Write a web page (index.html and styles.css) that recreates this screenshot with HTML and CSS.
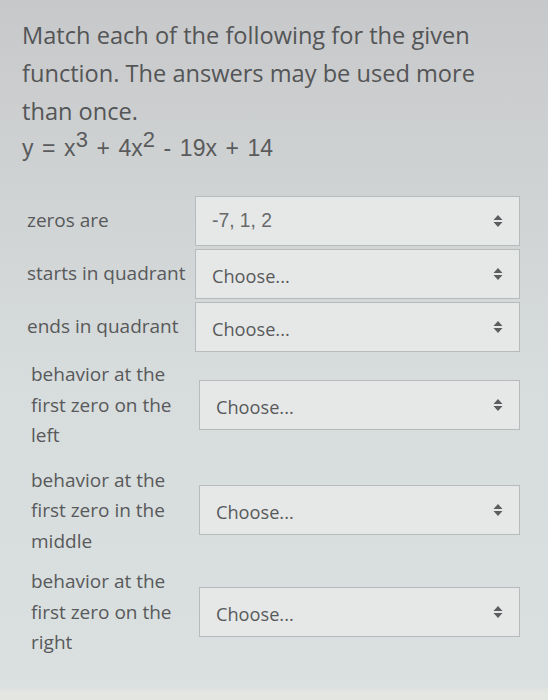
FILE: index.html
```html
<!DOCTYPE html>
<html>
<head>
<meta charset="utf-8">
<link rel="stylesheet" href="styles.css">
</head>
<body>
<div class="panel">
  <p class="prompt">Match each of the following for the given function. The answers may be used more than once.</p>
  <p class="equation">y = x<sup>3</sup> + 4x<sup>2</sup> - 19x + 14</p>
  <div class="rows">
    <div class="row short">
      <div class="label">zeros are</div>
      <div class="select"><span class="value">-7, 1, 2</span><span class="arrows"><svg width="10" height="14" viewBox="0 0 10 14"><path d="M5 1 L9.5 6 H0.5 Z M0.5 8 H9.5 L5 13 Z" fill="#5b5d5e"/></svg></span></div>
    </div>
    <div class="row short">
      <div class="label">starts in quadrant</div>
      <div class="select"><span class="choose">Choose...</span><span class="arrows"><svg width="10" height="14" viewBox="0 0 10 14"><path d="M5 1 L9.5 6 H0.5 Z M0.5 8 H9.5 L5 13 Z" fill="#5b5d5e"/></svg></span></div>
    </div>
    <div class="row short">
      <div class="label">ends in quadrant</div>
      <div class="select"><span class="choose">Choose...</span><span class="arrows"><svg width="10" height="14" viewBox="0 0 10 14"><path d="M5 1 L9.5 6 H0.5 Z M0.5 8 H9.5 L5 13 Z" fill="#5b5d5e"/></svg></span></div>
    </div>
    <div class="row tall">
      <div class="label">behavior at the first zero on the left</div>
      <div class="select"><span class="choose">Choose...</span><span class="arrows"><svg width="10" height="14" viewBox="0 0 10 14"><path d="M5 1 L9.5 6 H0.5 Z M0.5 8 H9.5 L5 13 Z" fill="#5b5d5e"/></svg></span></div>
    </div>
    <div class="row tall">
      <div class="label">behavior at the first zero in the middle</div>
      <div class="select"><span class="choose">Choose...</span><span class="arrows"><svg width="10" height="14" viewBox="0 0 10 14"><path d="M5 1 L9.5 6 H0.5 Z M0.5 8 H9.5 L5 13 Z" fill="#5b5d5e"/></svg></span></div>
    </div>
    <div class="row tall">
      <div class="label">behavior at the first zero on the right</div>
      <div class="select"><span class="choose">Choose...</span><span class="arrows"><svg width="10" height="14" viewBox="0 0 10 14"><path d="M5 1 L9.5 6 H0.5 Z M0.5 8 H9.5 L5 13 Z" fill="#5b5d5e"/></svg></span></div>
    </div>
  </div>
</div>
</body>
</html>
```

FILE: styles.css
```css
html, body {
  margin: 0;
  padding: 0;
}
body {
  width: 548px;
  height: 700px;
  overflow: hidden;
  background: linear-gradient(180deg, #c7c8ca 0%, #cfd2d3 25%, #d7dcdc 55%, #dae0df 98%, #e4e6e2 99%);
  font-family: "Open Sans", "Noto Sans", sans-serif;
  color: #58595b;
}
.panel {
  padding: 16px 0 0 22px;
  border-left: 6px solid #dde0dc;
  margin-left: -6px;
}
.prompt {
  margin: 0;
  width: 480px;
  font-size: 23.6px;
  line-height: 38px;
  color: #545556;
}
.equation {
  margin: 0;
  font-family: "Liberation Sans", Arial, sans-serif;
  font-size: 23px;
  line-height: 36px;
  color: #5a5b5c;
  word-spacing: 2.2px;
}
.equation sup {
  font-size: 22px;
  line-height: 0;
}
.rows {
  margin-top: 28px;
  padding-left: 5px;
  width: 493px;
}
.row {
  display: grid;
  grid-template-columns: 168px 1fr;
  align-items: center;
}
.row.short {
  height: 53px;
}
.row.tall {
  padding: 6px 0 7px 4px;
}
.row.tall + .row.tall {
  padding-top: 7px;
}
.row.tall + .row.tall:last-child {
  padding-top: 3px;
}
.label {
  font-size: 19px;
  line-height: 30.5px;
  color: #58595b;
  padding-right: 6px;
}
.row.short .label {
  white-space: nowrap;
}
.row.tall .label {
  width: 160px;
}
.select {
  height: 50px;
  box-sizing: border-box;
  border: 1px solid #b7bbbb;
  background: #e6e8e8;
  display: flex;
  align-items: center;
  padding-left: 16px;
  padding-right: 16px;
}
.value {
  font-family: "Liberation Sans", Arial, sans-serif;
  font-size: 19.3px;
  color: #66686a;
  flex: 1;
}
.choose {
  font-size: 18.2px;
  color: #58595b;
  flex: 1;
  position: relative;
  top: 2px;
}
.arrows {
  display: flex;
  align-items: center;
}
```
